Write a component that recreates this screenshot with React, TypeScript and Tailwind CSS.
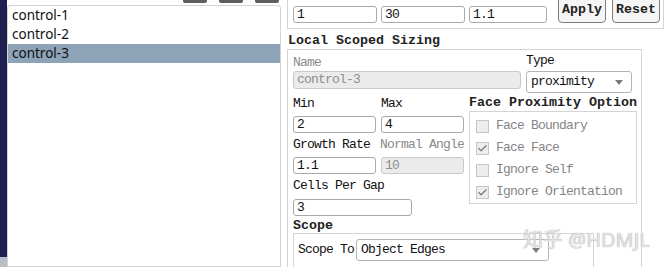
import { Check } from "lucide-react";

const mono = "[font-family:Liberation_Mono,Courier_New,monospace] text-[13px] tracking-[-0.8px]";
const bold = "[font-family:Liberation_Mono,Courier_New,monospace] text-[13.33px] font-bold tracking-normal";

function Field({ value, w, h = 17, disabled = false }: { value: string; w: number | string; h?: number; disabled?: boolean }) {
  return (
    <input
      readOnly
      value={value}
      style={{ width: w, height: h }}
      className={`${mono} block px-[3px] py-0 rounded-[3px] border outline-none ${disabled ? "bg-[#ebebeb] border-[#c9c9c9] text-[#8e8e8e]" : "bg-white border-[#a9a9a9] text-[#111]"}`}
    />
  );
}

function Select({ value, w }: { value: string; w: number }) {
  return (
    <div
      style={{ width: w }}
      className={`${mono} h-[22px] flex items-center justify-between pl-[4px] pr-[8px] rounded-[3px] border border-[#b4b4b4] bg-white text-[#111]`}
    >
      <span>{value}</span>
      <svg width="8" height="5" viewBox="0 0 8 5">
        <path d="M0 0 H8 L4 5 Z" fill="#7c7c7c" />
      </svg>
    </div>
  );
}

function Checkbox({ label, checked }: { label: string; checked: boolean }) {
  return (
    <div className="h-[22px] flex items-center gap-[7px]">
      <div className="w-[13px] h-[13px] border border-[#c6c6c6] bg-[#ededed] flex items-center justify-center">
        {checked && <Check size={11} strokeWidth={2.6} color="#7a7a7a" />}
      </div>
      <span className={`${mono} text-[#858585]`}>{label}</span>
    </div>
  );
}

export default function App() {
  const items = ["control-1", "control-2", "control-3"];
  return (
    <div className="w-[668px] h-[267px] overflow-hidden bg-white flex relative">
      {/* left dark strip */}
      <div className="w-[7px] flex flex-col">
        <div className="h-[257px] bg-[#1e1f4f]" />
        <div className="flex-1 bg-[#b9bdc5]" />
      </div>

      {/* list panel */}
      <div className="w-[280px] flex flex-col pr-[6px]">
        <div className="h-[5px] flex justify-end gap-[12px] pr-[2px]">
          <div className="w-[24px] h-[3px] bg-[#5e5e5e] rounded-b-[2px]" />
          <div className="w-[24px] h-[3px] bg-[#5e5e5e] rounded-b-[2px]" />
          <div className="w-[24px] h-[3px] bg-[#5e5e5e] rounded-b-[2px]" />
        </div>
        <div className="flex-1 border border-[#d3d3d3] rounded-t-[3px] bg-white">
          {items.map((it, i) => (
            <div
              key={it}
              className={`h-[19px] pl-[4px] leading-[19px] text-[13.5px] [font-family:Noto_Sans,sans-serif] text-[#111] ${i === 2 ? "bg-[#8ca3b8]" : ""}`}
            >
              {it}
            </div>
          ))}
        </div>
      </div>

      {/* settings panel */}
      <div className="flex-1 flex flex-col">
        {/* top row */}
        <div className="w-[377px] h-[29px] border-x border-b border-[#d4d4d4] flex items-start pl-[5px]">
          <div className="mt-[6px] flex gap-[4px]">
            <Field value="1" w={84} />
            <Field value="30" w={84} />
            <Field value="1.1" w={78} />
          </div>
          <button className={`${bold} ml-[11px] -mt-[4px] w-[48px] h-[27px] rounded-[4px] border border-[#7d7d7d] bg-[#f5f5f5] text-[#222]`}>
            Apply
          </button>
          <button className={`${bold} ml-[6px] -mt-[4px] w-[48px] h-[27px] rounded-[4px] border border-[#7d7d7d] bg-[#f5f5f5] text-[#222]`}>
            Reset
          </button>
        </div>

        <div className={`${bold} h-[20px] pt-[4px] pl-[1px] leading-[16px] text-[#222]`}>Local Scoped Sizing</div>

        {/* group box */}
        <div className="w-[355px] flex-1 border-l border-t border-r border-[#d4d4d4] pl-[5px] flex flex-col">
          <div className="flex">
            <div className="w-[228px] pt-[5px] flex flex-col">
              <div className={`${mono} h-[16px] leading-[16px] text-[#8a8a8a]`}>Name</div>
              <Field value="control-3" w={228} h={18} disabled />
            </div>
            <div className="ml-[5px] pt-[3px] flex flex-col">
              <div className={`${mono} h-[16px] leading-[16px] text-[#111]`}>Type</div>
              <div className="mt-[2px]">
                <Select value="proximity" w={106} />
              </div>
            </div>
          </div>

          <div className="mt-[2px] flex">
            <div className="w-[171px] pt-[1px] flex flex-col">
              <div className={`${mono} h-[16px] leading-[16px] flex text-[#111]`}>
                <span className="w-[88px]">Min</span>
                <span>Max</span>
              </div>
              <div className="mt-[4px] flex gap-[5px]">
                <Field value="2" w={83} />
                <Field value="4" w={83} />
              </div>
              <div className={`${mono} mt-[4px] h-[16px] leading-[16px] flex whitespace-nowrap`}>
                <span className="w-[88px] text-[#111]">Growth Rate</span>
                <span className="text-[#8a8a8a]">Normal Angle</span>
              </div>
              <div className="mt-[4px] flex gap-[5px]">
                <Field value="1.1" w={83} />
                <Field value="10" w={83} disabled />
              </div>
              <div className={`${mono} mt-[4px] h-[16px] leading-[16px] text-[#111]`}>Cells Per Gap</div>
              <div className="mt-[5px]">
                <Field value="3" w={119} />
              </div>
            </div>

            <div className="ml-[5px] w-[168px] flex flex-col">
              <div className={`${bold} h-[16px] leading-[16px] text-[#222] whitespace-nowrap`}>Face Proximity Option</div>
              <div className="h-[93px] border border-[#d4d4d4] pt-[3px] pl-[6px]">
                <Checkbox label="Face Boundary" checked={false} />
                <Checkbox label="Face Face" checked />
                <Checkbox label="Ignore Self" checked={false} />
                <Checkbox label="Ignore Orientation" checked />
              </div>
            </div>
          </div>

          <div className={`${bold} mt-[3px] h-[14px] leading-[14px] text-[#222]`}>Scope</div>
          <div className="w-[301px] flex-1 border-l border-t border-r border-[#d4d4d4] pt-[5px] pl-[4px] flex items-start">
            <div className={`${mono} h-[22px] leading-[22px] text-[#111] w-[58px] whitespace-nowrap`}>Scope To</div>
            <Select value="Object Edges" w={193} />
          </div>
        </div>
      </div>

      {/* watermark */}
      <div className="absolute left-[523px] top-[228px] text-[20px] leading-[24px] [font-family:Noto_Sans,Noto_Sans_CJK_SC,sans-serif] text-[#e4e4e4] [text-shadow:0_0_1px_#8f8f8f] whitespace-nowrap">
        知乎 @HDMJL
      </div>
    </div>
  );
}
